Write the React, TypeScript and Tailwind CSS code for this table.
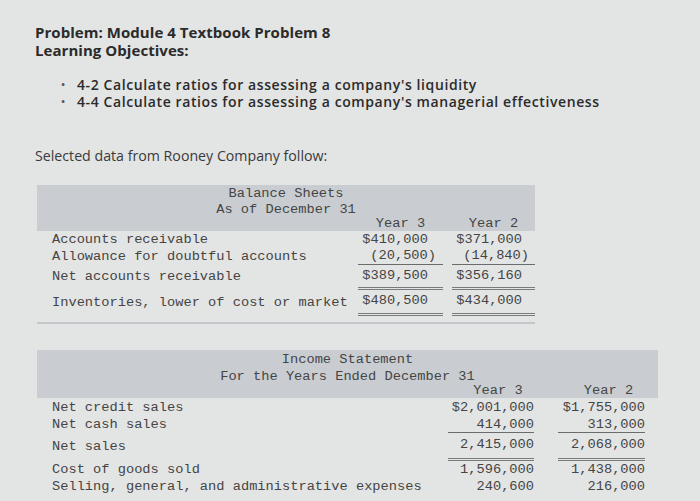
import React from 'react';

const mono = "font-['Liberation_Mono','DejaVu_Sans_Mono',monospace] text-[13.7px] text-[#454545]";

type Row = { label: string; a: string; b: string; h: string; line?: 'single' | 'double'; hang?: boolean };

const balanceRows: Row[] = [
  { label: 'Accounts receivable', a: '$410,000', b: '$371,000', h: 'h-[18px]' },
  { label: 'Allowance for doubtful accounts', a: '(20,500)', b: '(14,840)', h: 'h-[16px]', line: 'single', hang: true },
  { label: 'Net accounts receivable', a: '$389,500', b: '$356,160', h: 'h-[25px]', line: 'double' },
  { label: 'Inventories, lower of cost or market', a: '$480,500', b: '$434,000', h: 'h-[26px]', line: 'double' },
];

const incomeRows: Row[] = [
  { label: 'Net credit sales', a: '$2,001,000', b: '$1,755,000', h: 'h-[20px]' },
  { label: 'Net cash sales', a: '414,000', b: '313,000', h: 'h-[15px]', line: 'single' },
  { label: 'Net sales', a: '2,415,000', b: '2,068,000', h: 'h-[28px]', line: 'double' },
  { label: 'Cost of goods sold', a: '1,596,000', b: '1,438,000', h: 'h-[18px]' },
  { label: 'Selling, general, and administrative expenses', a: '240,600', b: '216,000', h: 'h-[17px]' },
];

function lineClass(line?: 'single' | 'double') {
  if (line === 'single') return 'border-b border-[#6b6b6b]';
  if (line === 'double') return 'border-b-[3px] border-double border-[#7a7a7a]';
  return '';
}

function BalanceSheet() {
  return (
    <div className={`w-[498px] ml-[2px] ${mono}`}>
      <div className="bg-[#c9cdd1] h-[46px] leading-[16px]">
        <div className="text-center pt-[1px]">Balance Sheets</div>
        <div className="text-center">As of December 31</div>
        <div className="flex -mt-[2px]">
          <div className="flex-1" />
          <div className="w-[85px] text-center">Year 3</div>
          <div className="w-[9px]" />
          <div className="w-[83px] text-center">Year 2</div>
        </div>
      </div>
      {balanceRows.map((r) => (
        <div key={r.label} className={`flex items-end ${r.h}`}>
          <div className="flex-1 pl-[15px] self-center whitespace-nowrap">{r.label}</div>
          <div className={`w-[85px] h-full flex items-center justify-end ${r.hang ? 'pr-[7px]' : 'pr-[15px]'} ${lineClass(r.line)}`}>{r.a}</div>
          <div className="w-[9px]" />
          <div className={`w-[83px] h-full flex items-center justify-end ${r.hang ? 'pr-[6px]' : 'pr-[13px]'} ${lineClass(r.line)}`}>{r.b}</div>
        </div>
      ))}
      <div className="h-[8px] border-b-2 border-[#c3c6ca]" />
    </div>
  );
}

function IncomeStatement() {
  return (
    <div className={`w-[621px] ml-[2px] mt-[26px] ${mono}`}>
      <div className="bg-[#c9cdd1] h-[48px] leading-[17px]">
        <div className="text-center pt-[1px]">Income Statement</div>
        <div className="text-center">For the Years Ended December 31</div>
        <div className="flex -mt-[2px] leading-[16px]">
          <div className="flex-1" />
          <div className="w-[86px] text-center pl-[14px]">Year 3</div>
          <div className="w-[24px]" />
          <div className="w-[87px] text-center pl-[14px]">Year 2</div>
          <div className="w-[13px]" />
        </div>
      </div>
      {incomeRows.map((r) => (
        <div key={r.label} className={`flex ${r.h}`}>
          <div className="flex-1 pl-[15px] self-center whitespace-nowrap">{r.label}</div>
          <div className={`w-[86px] h-full flex items-center justify-end ${lineClass(r.line)}`}>{r.a}</div>
          <div className="w-[24px]" />
          <div className={`w-[87px] h-full flex items-center justify-end ${lineClass(r.line)}`}>{r.b}</div>
          <div className="w-[13px]" />
        </div>
      ))}
    </div>
  );
}

export default function App() {
  return (
    <div className="w-[700px] h-[501px] overflow-hidden bg-[#e3e4e4] pl-[35px] pt-[23px] font-['Open_Sans','Lato',sans-serif] text-[#2b2b2b]">
      <div className="font-bold text-[15px] leading-[18px] tracking-[0.05px]">
        <p>Problem: Module 4 Textbook Problem 8</p>
        <p>Learning Objectives:</p>
      </div>

      <ul className="mt-[17px] font-semibold text-[14px] leading-[17px] tracking-[0.6px]">
        {[
          "4-2 Calculate ratios for assessing a company's liquidity",
          "4-4 Calculate ratios for assessing a company's managerial effectiveness",
        ].map((t) => (
          <li key={t} className="flex">
            <span className="w-[42px] pl-[26px] text-[#555] text-[11px]">•</span>
            <span>{t}</span>
          </li>
        ))}
      </ul>

      <p className="mt-[37px] text-[14.2px] leading-[17px] text-[#3a3a3a]">Selected data from Rooney Company follow:</p>

      <div className="mt-[21px]">
        <BalanceSheet />
        <IncomeStatement />
      </div>
    </div>
  );
}
